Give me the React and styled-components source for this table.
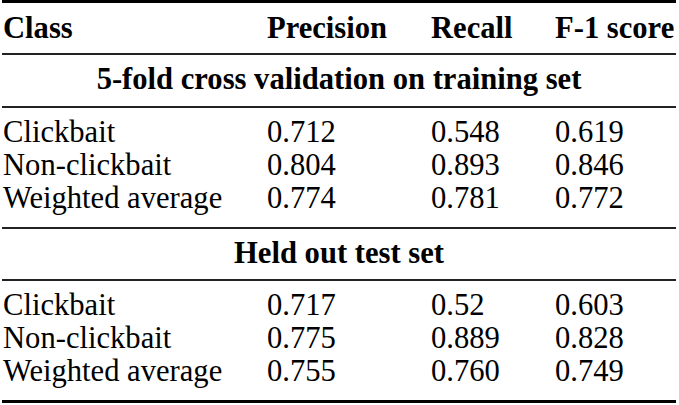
import React from "react";
import styled, { createGlobalStyle } from "styled-components";

const SERIF = `"Liberation Serif", Tinos, "Times New Roman", Times, "Nimbus Roman", "DejaVu Serif", serif`;

const Global = createGlobalStyle`
  html, body { margin: 0; padding: 0; background: #ffffff; }
  body { font-family: ${SERIF}; color: #000; }
`;

const Table = styled.div`
  width: 674px;
  margin-left: 2px;
  font-family: ${SERIF};
  font-size: 30.6px;
  line-height: 33px;
  color: #000;
`;

const Rule = styled.div`
  height: ${(p) => (p.$thick ? "3px" : "2px")};
  background: ${(p) => (p.$thick ? "#000" : "#222")};
`;

const Row = styled.div`
  display: grid;
  grid-template-columns: 264px 164px 124px 1fr;
  padding-left: 1px;
  font-weight: ${(p) => (p.$bold ? 700 : 400)};
  white-space: nowrap;
`;

const Section = styled.div`
  padding: ${(p) => p.$pad};
`;

const SectionTitle = styled.div`
  text-align: center;
  font-weight: 700;
  padding: ${(p) => p.$pad};
  white-space: nowrap;
`;

const Cell = styled.div``;

const sections = [
  {
    title: "5-fold cross validation on training set",
    titlePad: "8px 0 10px",
    bodyPad: "8px 0 12px",
    rows: [
      ["Clickbait", "0.712", "0.548", "0.619"],
      ["Non-clickbait", "0.804", "0.893", "0.846"],
      ["Weighted average", "0.774", "0.781", "0.772"],
    ],
  },
  {
    title: "Held out test set",
    titlePad: "8px 0 9px",
    bodyPad: "8px 0 12px",
    rows: [
      ["Clickbait", "0.717", "0.52", "0.603"],
      ["Non-clickbait", "0.775", "0.889", "0.828"],
      ["Weighted average", "0.755", "0.760", "0.749"],
    ],
  },
];

export default function App() {
  return (
    <>
      <Global />
      <Table>
        <Rule $thick />
        <Section $pad="9px 0 8px">
          <Row $bold>
            <Cell>Class</Cell>
            <Cell>Precision</Cell>
            <Cell>Recall</Cell>
            <Cell>F-1 score</Cell>
          </Row>
        </Section>
        {sections.map((s) => (
          <React.Fragment key={s.title}>
            <Rule />
            <SectionTitle $pad={s.titlePad}>{s.title}</SectionTitle>
            <Rule />
            <Section $pad={s.bodyPad}>
              {s.rows.map((r) => (
                <Row key={r[0]}>
                  {r.map((c, j) => (
                    <Cell key={j}>{c}</Cell>
                  ))}
                </Row>
              ))}
            </Section>
          </React.Fragment>
        ))}
        <Rule $thick />
      </Table>
    </>
  );
}
